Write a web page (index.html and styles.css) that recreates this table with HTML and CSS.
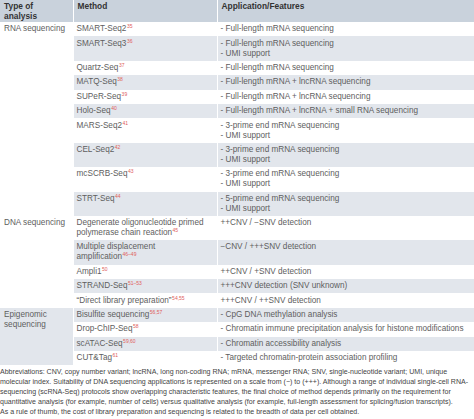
FILE: index.html
```html
<!DOCTYPE html>
<html>
<head>
<meta charset="utf-8">
<link rel="stylesheet" href="styles.css">
</head>
<body>
<table class="tbl">
  <colgroup><col class="c1"><col class="c2"><col class="c3"></colgroup>
  <thead>
    <tr><th>Type of<br>analysis</th><th>Method</th><th>Application/Features</th></tr>
  </thead>
  <tbody>
    <tr class="w"><td class="cat" rowspan="10">RNA sequencing</td><td>SMART-Seq2<sup>35</sup></td><td>- Full-length mRNA sequencing</td></tr>
    <tr class="g d"><td>SMART-Seq3<sup>36</sup></td><td>- Full-length mRNA sequencing<br>- UMI support</td></tr>
    <tr class="w"><td>Quartz-Seq<sup>37</sup></td><td>- Full-length mRNA sequencing</td></tr>
    <tr class="g"><td>MATQ-Seq<sup>38</sup></td><td>- Full-length mRNA + lncRNA sequencing</td></tr>
    <tr class="w"><td>SUPeR-Seq<sup>39</sup></td><td>- Full-length mRNA + lncRNA sequencing</td></tr>
    <tr class="g"><td>Holo-Seq<sup>40</sup></td><td>- Full-length mRNA + lncRNA + small RNA sequencing</td></tr>
    <tr class="w d"><td>MARS-Seq2<sup>41</sup></td><td>- 3-prime end mRNA sequencing<br>- UMI support</td></tr>
    <tr class="g d"><td>CEL-Seq2<sup>42</sup></td><td>- 3-prime end mRNA sequencing<br>- UMI support</td></tr>
    <tr class="w d"><td>mcSCRB-Seq<sup>43</sup></td><td>- 3-prime end mRNA sequencing<br>- UMI support</td></tr>
    <tr class="g d"><td>STRT-Seq<sup>44</sup></td><td>- 5-prime end mRNA sequencing<br>- UMI support</td></tr>
    <tr class="w d"><td class="cat" rowspan="5">DNA sequencing</td><td>Degenerate oligonucleotide primed<br>polymerase chain reaction<sup>45</sup></td><td>++CNV / −SNV detection</td></tr>
    <tr class="g d"><td>Multiple displacement<br>amplification<sup>46–49</sup></td><td>−CNV / +++SNV detection</td></tr>
    <tr class="w"><td>Ampli1<sup>50</sup></td><td>++CNV / +SNV detection</td></tr>
    <tr class="g"><td>STRAND-Seq<sup>51–53</sup></td><td>+++CNV detection (SNV unknown)</td></tr>
    <tr class="w"><td>“Direct library preparation”<sup>54,55</sup></td><td>+++CNV / ++SNV detection</td></tr>
    <tr class="g"><td class="cat catg" rowspan="4">Epigenomic sequencing</td><td>Bisulfite sequencing<sup>56,57</sup></td><td>- CpG DNA methylation analysis</td></tr>
    <tr class="w"><td>Drop-ChIP-Seq<sup>58</sup></td><td>- Chromatin immune precipitation analysis for histone modifications</td></tr>
    <tr class="g"><td>scATAC-Seq<sup>59,60</sup></td><td>- Chromatin accessibility analysis</td></tr>
    <tr class="w"><td>CUT&amp;Tag<sup>61</sup></td><td>- Targeted chromatin-protein association profiling</td></tr>
  </tbody>
</table>
<div class="note">
  <div class="ln">Abbreviations: CNV, copy number variant; lncRNA, long non-coding RNA; mRNA, messenger RNA; SNV, single-nucleotide variant; UMI, unique</div>
  <div class="ln">molecular index. Suitability of DNA sequencing applications is represented on a scale from (−) to (+++). Although a range of individual single-cell RNA-</div>
  <div class="ln">sequencing (scRNA-Seq) protocols show overlapping characteristic features, the final choice of method depends primarily on the requirement for</div>
  <div class="ln">quantitative analysis (for example, number of cells) versus qualitative analysis (for example, full-length assessment for splicing/fusion transcripts).</div>
  <div class="ln">As a rule of thumb, the cost of library preparation and sequencing is related to the breadth of data per cell obtained.</div>
</div>
</body>
</html>
```
FILE: styles.css
```css
html, body {
  margin: 0;
  padding: 0;
  background: #ffffff;
}
body {
  width: 474px;
  font-family: "Liberation Sans", Arial, sans-serif;
}
.tbl {
  width: 474px;
  table-layout: fixed;
  border-collapse: collapse;
  font-size: 8.2px;
  line-height: 10px;
  color: #5e5e5e;
}
.c1 { width: 73px; }
.c2 { width: 144px; }
.c3 { width: 257px; }
.tbl thead tr { height: 22px; }
.tbl tbody tr { height: 14.4px; }
.tbl tbody tr.d { height: 24.4px; }
.tbl th {
  background: #c9d2dc;
  color: #333333;
  font-weight: bold;
  font-size: 8.4px;
  text-align: left;
  vertical-align: top;
  padding: 1px 4px 1px 4px;
  border-left: 1px solid #ffffff;
}
.tbl th:first-child { border-left: none; }
.tbl td {
  vertical-align: top;
  padding: 2.2px 3px 0 3px;
  border-left: 1px solid #ffffff;
  white-space: nowrap;
}
.tbl td.cat {
  background: #ffffff;
  border-left: none;
  padding-left: 4px;
  white-space: normal;
}
.tbl tr.g td { background: #e2e6ec; }
.tbl tr.g td.cat { background: #ffffff; }
.tbl tr.g td.catg { background: #e2e6ec; }
.tbl sup {
  font-size: 5px;
  line-height: 0;
  color: #e0605a;
  vertical-align: 3px;
  margin-left: 0.5px;
}
.note {
  margin: 2px 0 0 0;
  font-size: 7.05px;
  line-height: 10px;
  color: #444444;
  white-space: nowrap;
}
```
